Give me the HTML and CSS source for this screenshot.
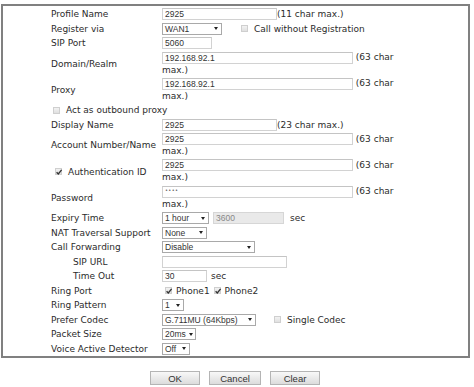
FILE: index.html
```html
<!DOCTYPE html>
<html>
<head>
<meta charset="utf-8">
<link rel="stylesheet" href="styles.css">
</head>
<body>
<div class="panel">
  <div class="row"><div class="lbl">Profile Name</div><div class="val"><input class="txt w115" value="2925"> <span class="note">(11 char max.)</span></div></div>
  <div class="row"><div class="lbl">Register via</div><div class="val"><span class="sel w60">WAN1<i class="arr"></i></span><span class="cb ml19"></span><span class="cbt">Call without Registration</span></div></div>
  <div class="row"><div class="lbl">SIP Port</div><div class="val"><input class="txt w50" value="5060"></div></div>
  <div class="row tall"><div class="lbl">Domain/Realm</div><div class="val"><input class="txt w191" value="192.168.92.1"> (63 char max.)</div></div>
  <div class="row tall"><div class="lbl">Proxy</div><div class="val"><input class="txt w191" value="192.168.92.1"> (63 char max.)</div></div>
  <div class="row"><div class="lbl span"><span class="cb lead"></span><span class="cbt">Act as outbound proxy</span></div></div>
  <div class="row"><div class="lbl">Display Name</div><div class="val"><input class="txt w115" value="2925"> <span class="note">(23 char max.)</span></div></div>
  <div class="row tall"><div class="lbl">Account Number/Name</div><div class="val"><input class="txt w191" value="2925"> (63 char max.)</div></div>
  <div class="row tall"><div class="lbl"><span class="cb on lead2"><svg viewBox="0 0 8 8"><path d="M1.6 4.2 L3.3 6 L6.6 1.8"/></svg></span><span class="cbt">Authentication ID</span></div><div class="val"><input class="txt w191" value="2925"> (63 char max.)</div></div>
  <div class="row tall"><div class="lbl">Password</div><div class="val"><input class="txt w191 pw" type="password" value="2925"> (63 char max.)</div></div>
  <div class="row"><div class="lbl">Expiry Time</div><div class="val"><span class="sel w47">1 hour<i class="arr"></i></span><input class="txt w71 dis ml4" value="3600" disabled><span class="unit">sec</span></div></div>
  <div class="row"><div class="lbl">NAT Traversal Support</div><div class="val"><span class="sel w45">None<i class="arr"></i></span></div></div>
  <div class="row"><div class="lbl">Call Forwarding</div><div class="val"><span class="sel w93">Disable<i class="arr"></i></span></div></div>
  <div class="row"><div class="lbl sub">SIP URL</div><div class="val"><input class="txt w125" value=""></div></div>
  <div class="row"><div class="lbl sub">Time Out</div><div class="val"><input class="txt w45" value="30"><span class="unit u2">sec</span></div></div>
  <div class="row"><div class="lbl">Ring Port</div><div class="val"><span class="cb on ml3"><svg viewBox="0 0 8 8"><path d="M1.6 4.2 L3.3 6 L6.6 1.8"/></svg></span><span class="cbt t2">Phone1</span><span class="cb on ml4"><svg viewBox="0 0 8 8"><path d="M1.6 4.2 L3.3 6 L6.6 1.8"/></svg></span><span class="cbt t2">Phone2</span></div></div>
  <div class="row"><div class="lbl">Ring Pattern</div><div class="val"><span class="sel w22">1<i class="arr"></i></span></div></div>
  <div class="row"><div class="lbl">Prefer Codec</div><div class="val"><span class="sel w94">G.711MU (64Kbps)<i class="arr"></i></span><span class="cb ml18"></span><span class="cbt">Single Codec</span></div></div>
  <div class="row"><div class="lbl">Packet Size</div><div class="val"><span class="sel w34">20ms<i class="arr"></i></span></div></div>
  <div class="row"><div class="lbl">Voice Active Detector</div><div class="val"><span class="sel w28">Off<i class="arr"></i></span></div></div>
</div>
<div class="buttons">
  <button class="btn b50">OK</button>
  <button class="btn b52">Cancel</button>
  <button class="btn b50">Clear</button>
</div>
</body>
</html>
```

FILE: styles.css
```css
html, body {
  margin: 0;
  padding: 0;
  background: #ffffff;
}
body {
  font-family: "DejaVu Sans", Verdana, sans-serif;
  font-size: 9px;
  color: #2b2b2b;
  width: 474px;
  height: 387px;
  overflow: hidden;
}
.panel {
  box-sizing: border-box;
  margin: 4px 0 0 1px;
  width: 469px;
  height: 354px;
  border: 2px solid #808080;
  padding: 1px 0 0 48px;
}
.row {
  display: grid;
  grid-template-columns: 111px 252px;
  height: 14.5px;
}
.row.tall {
  height: 26.3px;
}
.lbl {
  display: flex;
  align-items: center;
  white-space: nowrap;
}
.lbl.sub {
  padding-left: 22px;
}
.lbl.span {
  grid-column: 1 / 3;
}
.val {
  display: flex;
  align-items: center;
  flex-wrap: wrap;
  white-space: nowrap;
}
.row.tall .val {
  display: block;
  white-space: normal;
  line-height: 12.6px;
  padding-top: 0.5px;
}
.txt {
  box-sizing: border-box;
  height: 12px;
  margin: 0;
  padding: 0 2px;
  border: 1px solid #d2d2d2;
  border-top-color: #c4c4c4;
  background: #fff;
  font-family: "Liberation Sans", Arial, sans-serif;
  font-size: 8.5px;
  color: #333;
  vertical-align: middle;
  outline: none;
}
.txt.pw {
  font-family: "DejaVu Sans", sans-serif;
  font-size: 5px;
  letter-spacing: 0.4px;
  padding: 0 2px 3px;
  color: #444;
}
.txt.dis {
  background: #e9e9e9;
  color: #888;
  border-color: #d6d6d6;
}
.w45 { width: 45px; }
.w50 { width: 50px; }
.w71 { width: 71px; }
.w115 { width: 115px; }
.w125 { width: 125px; }
.w191 { width: 191px; }
.note {
  margin-left: 0;
}
.sel {
  box-sizing: border-box;
  display: inline-flex;
  align-items: center;
  justify-content: space-between;
  height: 12px;
  padding: 0 3px 0 2px;
  border: 1px solid #a9a9a9;
  background: #fff;
  font-family: "Liberation Sans", Arial, sans-serif;
  font-size: 8.5px;
  color: #333;
  white-space: nowrap;
}
.w22 { width: 22px; }
.w28 { width: 28px; }
.w34 { width: 34px; }
.w47 { width: 47px; }
.w60 { width: 60px; }
.w93 { width: 93px; }
.w94 { width: 94px; }
.sel.w45 { width: 45px; }
.arr {
  width: 0;
  height: 0;
  border-left: 2px solid transparent;
  border-right: 2px solid transparent;
  border-top: 3px solid #222;
  margin-left: 3px;
}
.cb {
  box-sizing: border-box;
  display: inline-block;
  width: 7px;
  height: 7px;
  border: 1px solid #cfcfcf;
  background: linear-gradient(#f2f2f2, #e0e0e0);
  flex: none;
}
.cb svg {
  display: block;
  width: 8px;
  height: 8px;
  margin: -1px 0 0 -1px;
}
.cb svg path {
  fill: none;
  stroke: #333;
  stroke-width: 1.3;
}
.cbt {
  margin-left: 6px;
}
.cbt.t2 {
  margin-left: 4px;
}
.lead { margin-left: 2px; }
.lead2 { margin-left: 4px; }
.ml3 { margin-left: 3px; }
.ml4 { margin-left: 4px; }
.ml18 { margin-left: 18px; }
.ml19 { margin-left: 19px; }
.unit {
  margin-left: 6px;
}
.unit.u2 {
  margin-left: 4px;
}
.buttons {
  display: flex;
  justify-content: center;
  gap: 9px;
  margin-top: 13px;
  padding-right: 4px;
}
.btn {
  box-sizing: border-box;
  height: 14px;
  margin: 0;
  padding: 0;
  border: 1px solid #b4b4b4;
  background: linear-gradient(#f8f8f8, #dcdcdc);
  font-family: "Liberation Sans", Arial, sans-serif;
  font-size: 9.5px;
  color: #333;
}
.b50 { width: 50px; }
.b52 { width: 52px; }
```
